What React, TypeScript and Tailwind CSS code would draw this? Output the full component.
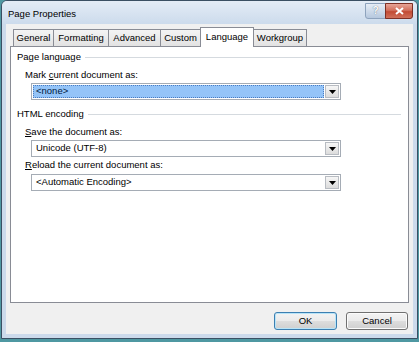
import React from "react";

const font = { fontFamily: "'Liberation Sans', Arial, sans-serif" };

function Arrow() {
  return (
    <svg width="7" height="4" viewBox="0 0 7 4">
      <path d="M0 0h7L3.5 4z" fill="#000" />
    </svg>
  );
}

function CloseGlyph() {
  return (
    <svg width="9" height="8" viewBox="0 0 9 8">
      <path d="M1 1l7 6M8 1L1 7" stroke="#fff" strokeWidth="2" />
    </svg>
  );
}

function Select({ value, selected }: { value: string; selected?: boolean }) {
  return (
    <div className="ml-[14px] flex h-[17px] w-[310px] items-stretch border border-[#a5acb5] bg-white p-px">
      {selected ? (
        <div className="flex flex-1 items-center border border-dotted border-[#4a7cc0] bg-[#94c4f8] pl-[2px] text-[#001a40]">
          {value}
        </div>
      ) : (
        <div className="flex flex-1 items-center pl-[3px]">{value}</div>
      )}
      <div className="ml-px flex w-[14px] items-center justify-center border border-[#b8bcc2] bg-[#e6e6e6] bg-[linear-gradient(#f6f6f6,#dcdcdc)]">
        <Arrow />
      </div>
    </div>
  );
}

function GroupHeader({ label }: { label: string }) {
  return (
    <div className="flex items-center leading-[12px]">
      <span>{label}</span>
      <div className="ml-[4px] h-px flex-1 bg-[#d5dadf]" />
    </div>
  );
}

function Tab({ label, width, active, first }: { label: string; width: string; active?: boolean; first?: boolean }) {
  if (active) {
    return (
      <div
        className={`relative z-10 -mb-px -ml-px flex h-[20px] items-start justify-center border border-b-0 border-[#898c95] bg-white pt-[2px] ${width}`}
      >
        {label}
      </div>
    );
  }
  return (
    <div
      className={`flex h-[17px] items-center justify-center border border-b-0 border-[#898c95] bg-[#ebebeb] bg-[linear-gradient(#f4f4f4,#e2e2e2)] ${first ? "" : "-ml-px"} ${width}`}
    >
      {label}
    </div>
  );
}

function Button({ children, primary }: { children: React.ReactNode; primary?: boolean }) {
  return (
    <div
      className={`flex h-[18px] items-center justify-center rounded-[3px] border bg-[#e4e4e4] bg-[linear-gradient(#f3f3f3,#ebebeb_48%,#dddddd_52%,#cfcfcf)] ${
        primary ? "w-[63px] border-[#3c7fb1] shadow-[inset_0_0_0_1px_#b8e4f8]" : "w-[62px] border-[#707070] shadow-[inset_0_0_0_1px_#fbfbfb]"
      }`}
    >
      {children}
    </div>
  );
}

export default function App() {
  return (
    <div className="h-[342px] w-[419px] overflow-hidden bg-[#4f98a2] text-[9.5px] text-black" style={font}>
      <div className="ml-px flex h-[339px] w-[417px] flex-col rounded-t-[6px] border border-[#3b4f63] bg-[#ccdaeb] px-[4px] pb-[4px]">
        {/* Title bar */}
        <div className="-mx-[4px] flex h-[23px] items-start rounded-t-[5px] bg-[#d8e3f1] bg-[linear-gradient(#e4ecf6,#ccdbec)] pl-[6px] pr-[4px]">
          <span className="mt-[7px] text-[9.5px] leading-[12px]">Page Properties</span>
          <div className="ml-auto mt-[2px] flex">
            <div className="flex h-[16px] w-[21px] items-center justify-center rounded-bl-[3px] border border-[#8ea3bd] bg-[#c3d3e6] bg-[linear-gradient(#e6edf6,#b6c8de)] text-[10px] font-bold leading-none text-white [text-shadow:0_0_1px_#3d4e63]">
              ?
            </div>
            <div className="-ml-px flex h-[16px] w-[28px] items-center justify-center rounded-br-[3px] border border-[#7e2f24] bg-[#cd5c46] bg-[linear-gradient(#e8a497,#d2705d_45%,#c24a33_55%,#d0705a)]">
              <CloseGlyph />
            </div>
          </div>
        </div>

        {/* Client area */}
        <div className="flex flex-1 flex-col bg-[#f0f0f0] px-[4px] pt-[3px]">
          <div className="flex h-[19px] items-end pl-[3px]">
            <Tab label="General" width="w-[41px]" first />
            <Tab label="Formatting" width="w-[56px]" />
            <Tab label="Advanced" width="w-[53px]" />
            <Tab label="Custom" width="w-[41px]" />
            <Tab label="Language" width="w-[54px]" active />
            <Tab label="Workgroup" width="w-[54px]" />
          </div>

          <div className="flex h-[257px] flex-col border border-[#898c95] bg-white pl-[6px] pr-[7px] pt-[4px]">
            <GroupHeader label="Page language" />
            <div className="ml-[8px] mt-[6px] leading-[12px]">
              Mark <span className="underline">c</span>urrent document as:
            </div>
            <div className="mt-[2px]">
              <Select value="<none>" selected />
            </div>

            <div className="mt-[8px]">
              <GroupHeader label="HTML encoding" />
            </div>
            <div className="ml-[8px] mt-[6px] leading-[12px]">
              <span className="underline">S</span>ave the document as:
            </div>
            <div className="mt-[2px]">
              <Select value="Unicode (UTF-8)" />
            </div>
            <div className="ml-[8px] mt-[2px] leading-[12px]">
              <span className="underline">R</span>eload the current document as:
            </div>
            <div className="mt-[3px]">
              <Select value="<Automatic Encoding>" />
            </div>
          </div>

          <div className="mt-[9px] flex justify-end gap-[9px] pr-px">
            <Button primary>OK</Button>
            <Button>Cancel</Button>
          </div>
        </div>
      </div>
    </div>
  );
}
